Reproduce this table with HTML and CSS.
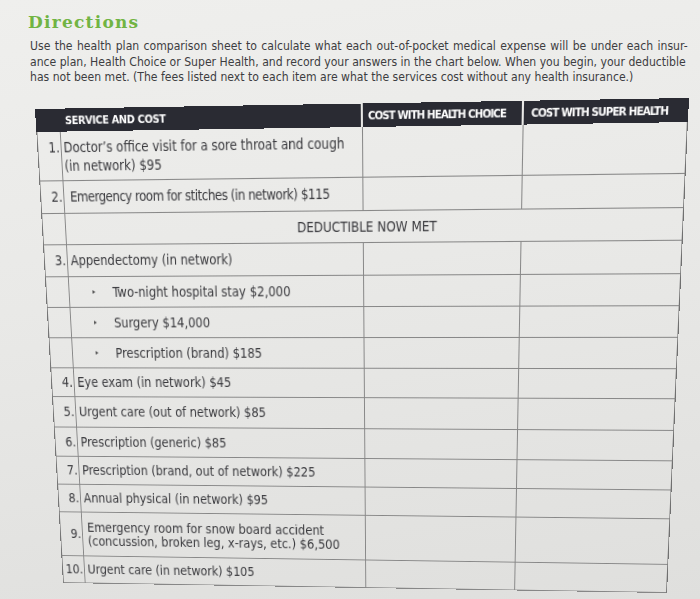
FILE: index.html
```html
<!DOCTYPE html>
<html lang="en">
<head>
<meta charset="utf-8">
<title>Directions</title>
<link rel="stylesheet" href="styles.css">
</head>
<body>
<div class="page">
  <h1 class="title">Directions</h1>
  <p class="intro">
    <span class="intro-line intro-first">Use the health plan comparison sheet to calculate what each out-of-pocket medical expense will be under each insur-</span>
    <span class="intro-line">ance plan, Health Choice or Super Health, and record your answers in the chart below. When you begin, your deductible</span>
    <span class="intro-line">has not been met. (The fees listed next to each item are what the services cost without any health insurance.)</span>
  </p>

  <div class="sheet">
    <div class="hd hd-service">SERVICE AND COST</div>
    <div class="hd">COST WITH HEALTH CHOICE</div>
    <div class="hd hd-last">COST WITH SUPER HEALTH</div>

    <div class="c num num-top">1.</div>
    <div class="c svc svc-two">Doctor’s office visit for a sore throat and cough<br>(in network) $95</div>
    <div class="c"></div><div class="c end"></div>

    <div class="c num">2.</div>
    <div class="c svc svc-wide">Emergency room for stitches (in network) $115</div>
    <div class="c"></div><div class="c end"></div>

    <div class="c num"></div>
    <div class="c end deductible">DEDUCTIBLE NOW MET</div>

    <div class="c num">3.</div>
    <div class="c svc">Appendectomy (in network)</div>
    <div class="c"></div><div class="c end"></div>

    <div class="c num"></div>
    <div class="c svc sub">Two-night hospital stay $2,000</div>
    <div class="c"></div><div class="c end"></div>

    <div class="c num"></div>
    <div class="c svc sub">Surgery $14,000</div>
    <div class="c"></div><div class="c end"></div>

    <div class="c num"></div>
    <div class="c svc sub">Prescription (brand) $185</div>
    <div class="c"></div><div class="c end"></div>

    <div class="c num">4.</div>
    <div class="c svc">Eye exam (in network) $45</div>
    <div class="c"></div><div class="c end"></div>

    <div class="c num">5.</div>
    <div class="c svc">Urgent care (out of network) $85</div>
    <div class="c"></div><div class="c end"></div>

    <div class="c num">6.</div>
    <div class="c svc">Prescription (generic) $85</div>
    <div class="c"></div><div class="c end"></div>

    <div class="c num">7.</div>
    <div class="c svc">Prescription (brand, out of network) $225</div>
    <div class="c"></div><div class="c end"></div>

    <div class="c num">8.</div>
    <div class="c svc">Annual physical (in network) $95</div>
    <div class="c"></div><div class="c end"></div>

    <div class="c num">9.</div>
    <div class="c svc svc-small">Emergency room for snow board accident<br>(concussion, broken leg, x-rays, etc.) $6,500</div>
    <div class="c"></div><div class="c end"></div>

    <div class="c num">10.</div>
    <div class="c svc">Urgent care (in network) $105</div>
    <div class="c"></div><div class="c end"></div>
  </div>
</div>
</body>
</html>
```

FILE: styles.css
```css
* { box-sizing: border-box; }

html, body { margin: 0; padding: 0; }

body {
  width: 700px;
  height: 599px;
  overflow: hidden;
  background: linear-gradient(172deg, #efefed 0%, #e9e9e7 45%, #dfdfdd 100%);
  font-family: "DejaVu Sans Condensed", "DejaVu Sans", sans-serif;
  color: #3d3d41;
}

.page { padding-top: 12px; }

.title {
  margin: 0 0 0 28px;
  font-family: "DejaVu Serif", serif;
  font-weight: 700;
  font-size: 17px;
  line-height: 20px;
  letter-spacing: 1.25px;
  color: #71b443;
}

.intro {
  margin: 7px 0 0 30px;
  font-size: 12.1px;
  line-height: 15.5px;
}

.intro-line { display: block; white-space: nowrap; }
.intro-first { word-spacing: 0.9px; }

.sheet {
  margin: 23.5px 0 0 35px;
  width: 640px;
  height: 489px;
  display: grid;
  grid-template-columns: 25px 303px 156px 156px;
  grid-template-rows: 22px 48px 32px 31px 32px 31px 31px 31px 30px 32px 31px 30px 30px 48px 30px;
  transform-origin: 0 0;
  transform: matrix3d(0.976847, -0.016430, 0, -0.00006885,
                      0.061908, 1.048010, 0, 0.00016600,
                      0, 0, 1, 0,
                      0, 0, 0, 1);
  font-size: 13.3px;
  color: #3a3a3e;
}

.hd {
  background: #2a2b33;
  color: #ffffff;
  font-weight: 700;
  font-size: 11px;
  letter-spacing: -0.85px;
  display: flex;
  align-items: center;
  padding-left: 5px;
  border-right: 2px solid #e9e9e7;
  white-space: nowrap;
  overflow: hidden;
}

.hd-service { grid-column: 1 / 3; padding-left: 30px; letter-spacing: -0.35px; }
.hd-last { border-right: 0; padding-left: 7px; }

.c {
  border-right: 1px solid #878787;
  border-bottom: 1px solid #878787;
  display: flex;
  align-items: center;
  white-space: nowrap;
}

.end { border-right-color: #707070; }

.num {
  border-left: 1px solid #767676;
  justify-content: flex-end;
  padding-right: 1px;
}

.num-top { align-items: flex-start; padding-top: 7px; line-height: 18px; }

.svc { padding-left: 3px; }
.svc-two { line-height: 18px; padding-left: 2px; padding-top: 2px; }
.svc-wide { padding-left: 6px; letter-spacing: -0.45px; }
.svc-small { font-size: 13.5px; line-height: 15px; padding-left: 5px; }

.sub { padding-left: 45px; position: relative; }
.sub::before {
  content: "";
  position: absolute;
  left: 24px;
  top: 50%;
  margin-top: -2px;
  border-left: 3px solid #555;
  border-top: 2px solid transparent;
  border-bottom: 2px solid transparent;
}

.deductible {
  grid-column: 2 / 5;
  justify-content: center;
  padding-right: 2px;
}
```
